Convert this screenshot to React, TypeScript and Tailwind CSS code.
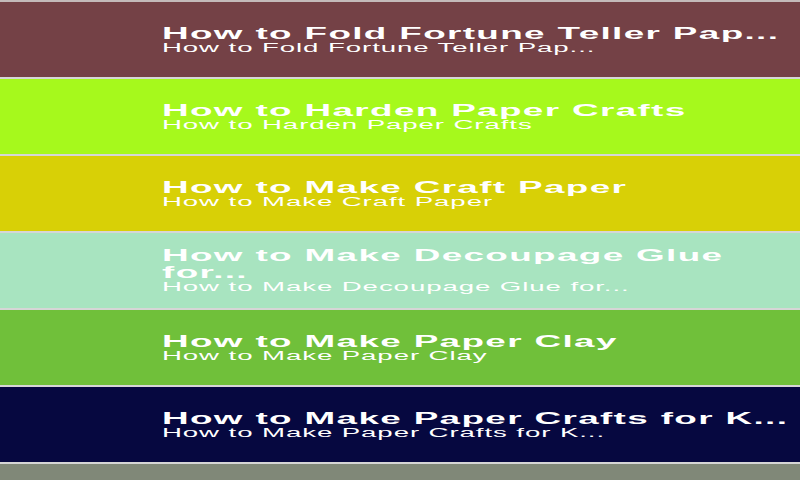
const items = [
  { bg: "bg-[#744146]", title: ["How to Fold Fortune Teller Pap..."], sub: "How to Fold Fortune Teller Pap..." },
  { bg: "bg-[#a6f91c]", title: ["How to Harden Paper Crafts"], sub: "How to Harden Paper Crafts" },
  { bg: "bg-[#d8d006]", title: ["How to Make Craft Paper"], sub: "How to Make Craft Paper" },
  { bg: "bg-[#a8e4c0]", title: ["How to Make Decoupage Glue", "for..."], sub: "How to Make Decoupage Glue for..." },
  { bg: "bg-[#70c03a]", title: ["How to Make Paper Clay"], sub: "How to Make Paper Clay" },
  { bg: "bg-[#060840]", title: ["How to Make Paper Crafts for K..."], sub: "How to Make Paper Crafts for K..." },
];

export default function App() {
  return (
    <div className="w-[800px] h-[480px] overflow-hidden flex flex-col bg-[#808878] font-['Liberation_Sans',Arial,sans-serif] text-white">
      <div className="h-[2px] shrink-0 bg-[#c4baba]" />
      {items.map((item) => (
        <div key={item.sub} className="shrink-0 flex flex-col">
          <div className={`h-[75px] flex items-center pl-[162px] ${item.bg}`}>
            <div className="origin-left scale-x-230 whitespace-nowrap">
              {item.title.map((line) => (
                <div key={line} className="text-[16px] leading-[17px] font-bold tracking-[0.6px]">
                  {line}
                </div>
              ))}
              <div className="text-[12px] leading-[13px] tracking-[0.4px]">{item.sub}</div>
            </div>
          </div>
          <div className="h-[2px] bg-[#d6d6d6]" />
        </div>
      ))}
    </div>
  );
}
